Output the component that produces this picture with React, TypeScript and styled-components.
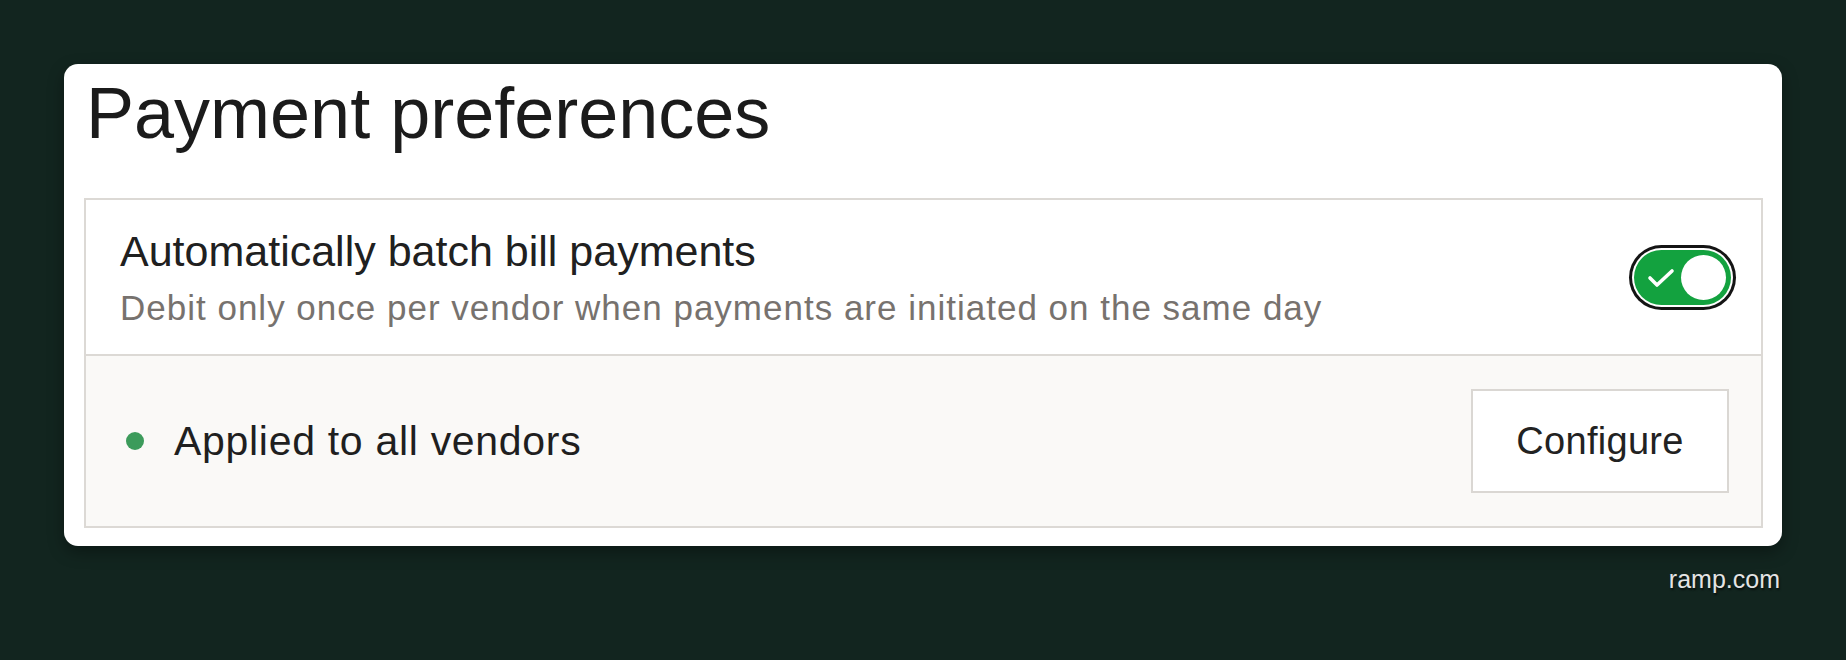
import React from "react";
import styled, { createGlobalStyle } from "styled-components";

const Global = createGlobalStyle`
  html, body {
    margin: 0;
    padding: 0;
    background: #12251f;
  }
  body {
    font-family: "Liberation Sans", Arial, Helvetica, sans-serif;
    -webkit-font-smoothing: antialiased;
  }
`;

const Page = styled.div`
  width: 1846px;
  height: 660px;
  box-sizing: border-box;
  padding: 64px 64px 0 64px;
  display: flex;
  flex-direction: column;
  background: #12251f;
`;

const Card = styled.section`
  background: #ffffff;
  border-radius: 14px;
  padding: 6px 19px 18px 20px;
  box-shadow: 0 6px 16px rgba(0, 0, 0, 0.35);
  display: flex;
  flex-direction: column;
`;

const Title = styled.h1`
  margin: 0 0 42px 0;
  padding-left: 2px;
  font-size: 72px;
  line-height: 86px;
  font-weight: 400;
  color: #1b1b1b;
`;

const Panel = styled.div`
  border: 2px solid #dcd9d5;
  display: flex;
  flex-direction: column;
`;

const SettingRow = styled.div`
  height: 156px;
  box-sizing: border-box;
  padding: 0 30px 0 34px;
  display: flex;
  align-items: center;
  justify-content: space-between;
  border-bottom: 2px solid #dcd9d5;
  background: #ffffff;
`;

const TextBlock = styled.div`
  display: flex;
  flex-direction: column;
  gap: 12px;
`;

const SettingTitle = styled.div`
  font-size: 43px;
  line-height: 50px;
  color: #202020;
`;

const SettingDesc = styled.div`
  font-size: 35px;
  line-height: 40px;
  color: #77726e;
  letter-spacing: 1px;
`;

const Track = styled.button<{ $on: boolean }>`
  position: relative;
  width: 97px;
  height: 55px;
  border: none;
  padding: 0;
  border-radius: 28px;
  background: ${(p) => (p.$on ? "#13a23f" : "#c9c6c2")};
  box-shadow: 0 0 0 2px #ffffff, 0 0 0 5px #141414;
  cursor: pointer;
  flex: none;
`;

const Knob = styled.span<{ $on: boolean }>`
  position: absolute;
  top: 5px;
  left: ${(p) => (p.$on ? "47px" : "5px")};
  width: 45px;
  height: 45px;
  border-radius: 50%;
  background: #ffffff;
`;

const Check = styled.svg`
  position: absolute;
  left: 12px;
  top: 16px;
`;

const ScopeRow = styled.div`
  height: 170px;
  box-sizing: border-box;
  padding: 0 32px 0 40px;
  display: flex;
  align-items: center;
  justify-content: space-between;
  background: #faf9f7;
`;

const Status = styled.div`
  display: flex;
  align-items: center;
  gap: 30px;
`;

const Dot = styled.span`
  width: 18px;
  height: 18px;
  border-radius: 50%;
  background: #3c9b5b;
  flex: none;
`;

const StatusText = styled.span`
  font-size: 41px;
  line-height: 48px;
  color: #1f1f1f;
  letter-spacing: 0.7px;
`;

const ConfigureButton = styled.button`
  width: 258px;
  height: 104px;
  box-sizing: border-box;
  border: 2px solid #dad7d3;
  background: #ffffff;
  font-family: "Liberation Sans", Arial, Helvetica, sans-serif;
  font-size: 38px;
  letter-spacing: 0.3px;
  color: #222222;
  cursor: pointer;
  padding: 0;
`;

const Footer = styled.div`
  display: flex;
  justify-content: flex-end;
  margin-top: 18px;
  padding-right: 2px;
`;

const Brand = styled.span`
  font-size: 25px;
  line-height: 30px;
  color: #e4e4e4;
  text-shadow: 1px 2px 2px rgba(0, 0, 0, 0.6);
`;

export default function App() {
  const on = true;
  return (
    <>
      <Global />
      <Page>
        <Card>
          <Title>Payment preferences</Title>
          <Panel>
            <SettingRow>
              <TextBlock>
                <SettingTitle>Automatically batch bill payments</SettingTitle>
                <SettingDesc>
                  Debit only once per vendor when payments are initiated on the same day
                </SettingDesc>
              </TextBlock>
              <Track $on={on} aria-pressed={on}>
                {on && (
                  <Check width="30" height="24" viewBox="0 0 30 24">
                    <polyline
                      points="4,12 11,19 26,5"
                      fill="none"
                      stroke="#ffffff"
                      strokeWidth="3.6"
                      strokeLinecap="round"
                      strokeLinejoin="round"
                    />
                  </Check>
                )}
                <Knob $on={on} />
              </Track>
            </SettingRow>
            <ScopeRow>
              <Status>
                <Dot />
                <StatusText>Applied to all vendors</StatusText>
              </Status>
              <ConfigureButton>Configure</ConfigureButton>
            </ScopeRow>
          </Panel>
        </Card>
        <Footer>
          <Brand>ramp.com</Brand>
        </Footer>
      </Page>
    </>
  );
}
